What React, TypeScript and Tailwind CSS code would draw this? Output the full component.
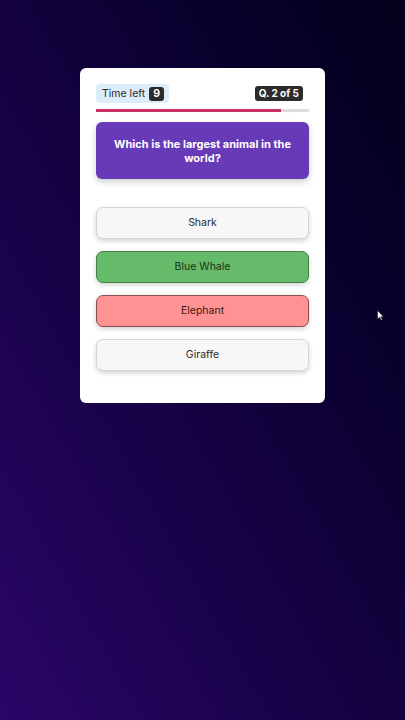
import React from 'react';

const options = [
  { label: 'Shark', state: 'idle' },
  { label: 'Blue Whale', state: 'correct' },
  { label: 'Elephant', state: 'wrong' },
  { label: 'Giraffe', state: 'idle' },
];

function OptionButton({ label, state }: { label: string; state: string }) {
  let cls = 'bg-[#f7f7f7] border-[#d6d6d6] text-[#2a2a2a]';
  if (state === 'correct') cls = 'bg-[#66bb6a] border-[#467f48] text-[#153315]';
  if (state === 'wrong') cls = 'bg-[#ff9393] border-[#8a5050] text-[#3b1616]';
  return (
    <button
      className={`h-[32px] w-full rounded-[7px] border text-[10.5px] shadow-[0_2px_5px_rgba(0,0,0,0.18)] ${cls}`}
    >
      {label}
    </button>
  );
}

export default function App() {
  const progress = 87;
  return (
    <div
      className="relative min-h-[720px] w-full bg-gradient-to-tr from-[#2a0667] to-[#02001a] pt-[68px]"
      style={{ fontFamily: 'Inter, "Noto Sans", sans-serif' }}
    >
      <div className="mx-auto flex h-[335px] w-[245px] flex-col rounded-[6px] bg-white px-4 pt-4">
        {/* Header */}
        <div className="flex items-center justify-between">
          <div className="flex h-[19px] items-center gap-[4px] rounded-[4px] bg-[#dcedfa] pl-[6px] pr-[5px] text-[10.5px] text-[#2b2b2b]">
            <span>Time left</span>
            <span className="flex h-[14px] w-[15px] items-center justify-center rounded-[3px] bg-[#2b2b2b] text-[10.5px] font-bold text-white">
              9
            </span>
          </div>
          <span className="mr-[6px] flex h-[15px] items-center rounded-[3px] bg-[#2b2b2b] px-[4px] text-[10px] font-bold text-white">
            Q. 2 of 5
          </span>
        </div>

        {/* Progress */}
        <div className="mt-[6px] h-[3px] w-full bg-[#dedede]">
          <div className="h-full bg-[#cf3064]" style={{ width: `${progress}%` }} />
        </div>

        {/* Question */}
        <div className="mt-[10px] flex h-[57px] items-center justify-center rounded-[6px] bg-[#673ab7] px-4 text-center text-[11px] font-bold leading-[14px] text-white shadow-[0_3px_6px_rgba(0,0,0,0.2)]">
          Which is the largest animal in the world?
        </div>

        {/* Options */}
        <div className="mt-[28px] flex flex-col gap-3">
          {options.map((o) => (
            <OptionButton key={o.label} label={o.label} state={o.state} />
          ))}
        </div>
      </div>

      {/* Mouse cursor */}
      <svg className="absolute left-[377px] top-[310px]" width="7" height="11" viewBox="0 0 7 11">
        <path d="M0.5 0.5 L0.5 9 L2.6 7.2 L4 10.3 L5.2 9.8 L3.8 6.8 L6.5 6.8 Z" fill="#fff" stroke="#222" strokeWidth="0.6" />
      </svg>
    </div>
  );
}
